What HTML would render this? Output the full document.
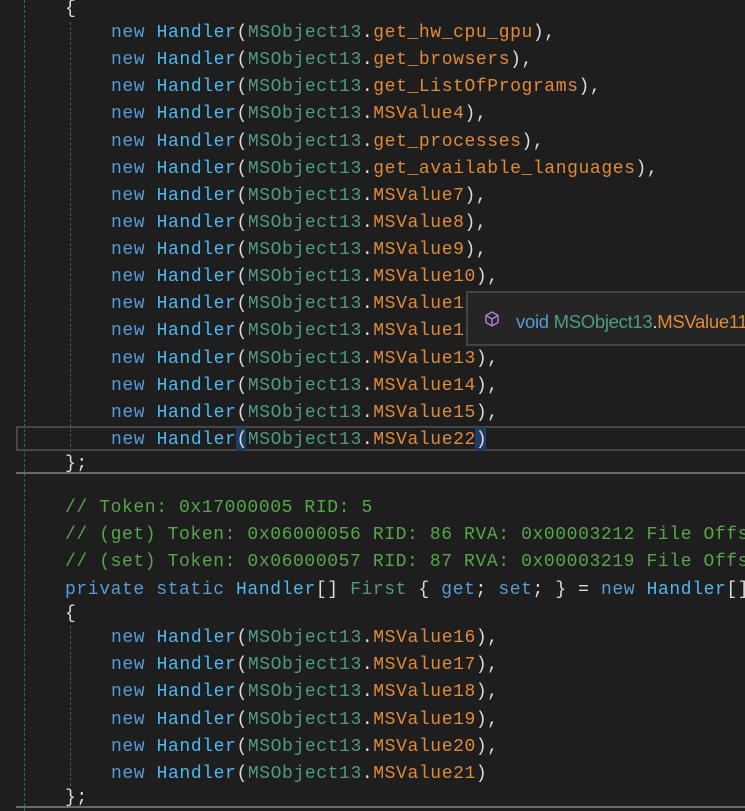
<!DOCTYPE html>
<html><head><meta charset="utf-8"><style>
html,body{margin:0;padding:0;background:#1e1e1e;width:745px;height:811px;overflow:hidden;position:relative}
.l{position:absolute;left:0;height:27px;line-height:27px;white-space:pre;font-family:"Liberation Mono",monospace;font-size:18px;letter-spacing:0.6px;color:#dcdcdc}
.k{color:#569cd6}.t{color:#4fb8f0}.c{color:#4e9a87}.m{color:#e08a3a}.g{color:#57a64a}
.gd{position:absolute;width:0;border-left:1px dashed}
.sep{position:absolute;left:16px;right:0;height:2px;background:#6a6a6a}
</style></head><body>
<div class="gd" style="left:24px;top:0;height:811px;border-color:#2f6b4f"></div>
<div class="gd" style="left:70px;top:22px;height:430px;border-color:#555"></div>
<div class="gd" style="left:70px;top:626px;height:160px;border-color:#555"></div>
<div style="position:absolute;left:16px;top:426px;width:740px;height:25px;border:2px solid #464646;box-sizing:border-box"></div>
<div style="position:absolute;left:236px;top:427px;width:10px;height:24px;background:#1f3d66"></div>
<div style="position:absolute;left:475px;top:427px;width:11px;height:24px;background:#1f3d66"></div>
<div class="sep" style="top:472px"></div>
<div class="sep" style="top:806px"></div>
<div id="c"></div>
<script>
var B='<span class="k">new</span> <span class="t">Handler</span>(<span class="c">MSObject13</span>.<span class="m">';
function L(y,x,h){document.write('<div class="l" style="top:'+(y-12)+'px;left:'+x+'px">'+h+'</div>');}
L(8,65,'{');
var a=['get_hw_cpu_gpu','get_browsers','get_ListOfPrograms','MSValue4','get_processes','get_available_languages','MSValue7','MSValue8','MSValue9','MSValue10','MSValue11','MSValue12','MSValue13','MSValue14','MSValue15','MSValue22'];
for(var i=0;i<16;i++)L(32+27.13*i,111,B+a[i]+'</span>)'+(i<15?',':''));
L(463,65,'};');
L(507,65,'<span class="g">// Token: 0x17000005 RID: 5</span>');
L(534,65,'<span class="g">// (get) Token: 0x06000056 RID: 86 RVA: 0x00003212 File Offset</span>');
L(561,65,'<span class="g">// (set) Token: 0x06000057 RID: 87 RVA: 0x00003219 File Offset</span>');
L(589,65,'<span class="k">private static</span> <span class="t">Handler</span>[] <span class="c">First</span> { <span class="k">get</span>; <span class="k">set</span>; } = <span class="k">new</span> <span class="t">Handler</span>[]');
L(613,65,'{');
for(var j=0;j<6;j++)L(637+27.2*j,111,B+'MSValue'+(16+j)+'</span>)'+(j<5?',':''));
L(797,65,'};');
</script>
<div style="position:absolute;left:466px;top:291px;width:290px;height:55px;background:#252526;border:2px solid #454545;box-sizing:border-box"></div>
<svg style="position:absolute;left:485px;top:311px" width="14" height="16" viewBox="0 0 14 16"><path d="M7 1L13 4.5V11.5L7 15L1 11.5V4.5Z M1 4.5L7 8L13 4.5 M7 8V15" fill="none" stroke="#b180d7" stroke-width="1.4"/></svg>
<div style="position:absolute;left:516px;top:309px;white-space:pre;font-family:'Liberation Sans',sans-serif;font-size:18.5px;letter-spacing:-0.3px;line-height:26px;color:#dcdcdc"><span class="k">void</span> <span class="c">MSObject13</span>.<span class="m">MSValue11</span></div>
</body></html>
